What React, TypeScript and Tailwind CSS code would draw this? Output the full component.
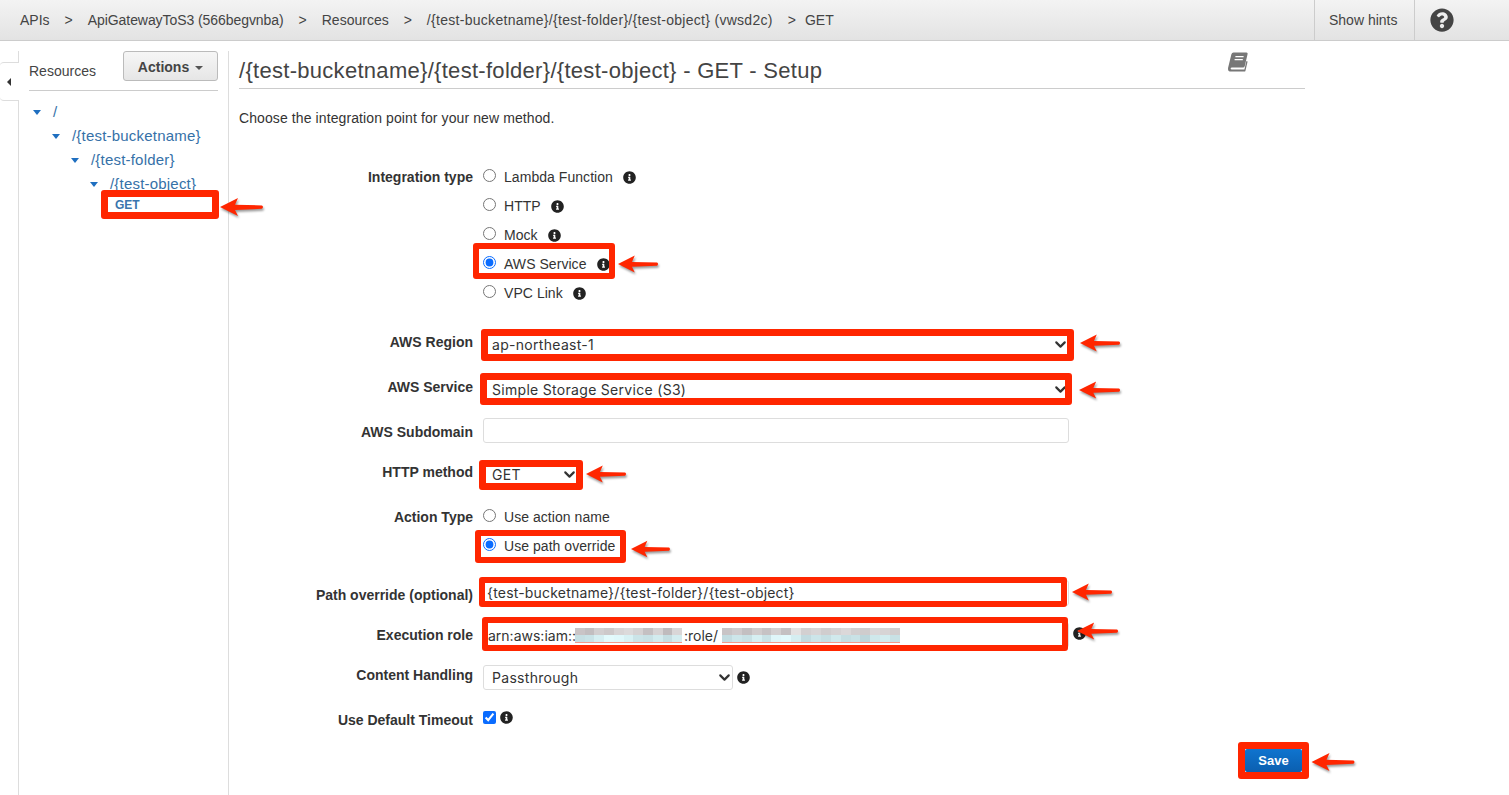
import React from "react";
import { FaInfoCircle, FaQuestionCircle } from "react-icons/fa";
import { ChevronDown } from "lucide-react";

const crumbs = [
  { text: "APIs", className: "" },
  { text: "ApiGatewayToS3 (566begvnba)", className: "tracking-[-0.07px]" },
  { text: "Resources", className: "" },
  { text: "/{test-bucketname}/{test-folder}/{test-object} (vwsd2c)", className: "tracking-[0.29px]" },
  { text: "GET", className: "-ml-[6px]" },
];

const blurA = {
  top: ["#c9c4c6", "#c2bec0", "#d2cfd0", "#cdc9ca", "#d8d5d6", "#dcdadb", "#d5d2d3", "#c4c0c2", "#d6d3d4", "#bfbbbd", "#d9d6d7"],
  bottom: ["#c6dfe3", "#c9e3e7", "#d6eff2", "#e3fafc", "#e0f8fb", "#d8f1f4", "#cbe4e8", "#c8e1e5", "#d2ebee", "#c5dee2", "#d4ecef"],
};
const blurB = {
  top: ["#c8c4c6", "#cfcbcd", "#c3bfc1", "#d0cccd", "#c6c2c4", "#d3d0d1", "#c4c0c2", "#e4e2e2", "#d3d0d1", "#d8d5d6", "#d0cdce", "#d5d2d3", "#dbd8d9", "#d2cfd0", "#cfcccd", "#dad7d8", "#d7d4d5", "#d1cecf"],
  bottom: ["#c3dce1", "#cde6ea", "#c8e1e5", "#d6eff2", "#c9e2e6", "#dff6f9", "#e2f9fc", "#d5eef1", "#c2dbe0", "#cce5e9", "#c6dfe3", "#d0e9ec", "#c5dee2", "#c9e2e6", "#bdd6db", "#cfe8eb", "#d3ecef", "#c8e1e5"],
};

function Info() {
  return <FaInfoCircle className="w-[13px] h-[13px] text-[#222] shrink-0" />;
}

function Radio({ label, checked, info }: { label: string; checked?: boolean; info?: boolean }) {
  return (
    <label className="h-[29px] flex items-center text-[14px] tracking-[0.05px] text-[#333]">
      <input
        type="radio"
        name={info ? "integration" : "action"}
        defaultChecked={checked}
        className="w-[13px] h-[13px] mr-[8px] -mt-[5px] accent-[#0a6cff]"
      />
      <span>{label}</span>
      {info && <span className="ml-[10px]"><Info /></span>}
    </label>
  );
}

function Select({ value, className }: { value: string; className: string }) {
  return (
    <div className={`relative ${className}`}>
      <select
        defaultValue={value}
        className="w-full h-full appearance-none bg-white border border-[#ddd] rounded-[3px] pl-[8px] pb-[2px] text-[14px] tracking-[0.3px] text-[#333] font-['Inter',sans-serif]"
      >
        <option>{value}</option>
      </select>
      <ChevronDown strokeWidth={3} className="absolute right-0 top-[4px] w-[17px] h-[17px] text-[#333] pointer-events-none" />
    </div>
  );
}

function Field({
  label,
  className,
  labelClass = "",
  children,
}: {
  label: string;
  className: string;
  labelClass?: string;
  children: React.ReactNode;
}) {
  return (
    <div className={`flex ${className}`}>
      <div className={`w-[234px] text-right font-bold text-[14px] leading-[20px] text-[#333] shrink-0 ${labelClass}`}>{label}</div>
      <div className="ml-[10px] flex-1 min-w-0">{children}</div>
    </div>
  );
}

function Blur({ data, className }: { data: { top: string[]; bottom: string[] }; className: string }) {
  return (
    <span className={`flex flex-col h-[15px] border-b border-[#f59a8c] shrink-0 ${className}`}>
      <span className="flex h-[7px]">
        {data.top.map((c, i) => <span key={i} className="flex-1" style={{ backgroundColor: c }} />)}
      </span>
      <span className="flex h-[7px]">
        {data.bottom.map((c, i) => <span key={i} className="flex-1" style={{ backgroundColor: c }} />)}
      </span>
    </span>
  );
}

function Arrow({ className }: { className: string }) {
  return (
    <svg viewBox="0 0 44 20" className={`absolute w-[44px] h-[20px] drop-shadow-[1px_2px_1px_rgba(0,0,0,0.4)] ${className}`}>
      <path d="M0 10 L18 1 L15 7.8 L42 8.4 Q44 10 42 11.8 L15 13 L18 19 Z" fill="#ff2600" />
    </svg>
  );
}

function Box({ className }: { className: string }) {
  return <div className={`absolute border-[#ff2600] rounded-[3px] pointer-events-none ${className}`} />;
}

function TreeRow({ level, label }: { level: string; label: string }) {
  return (
    <div className={`h-[24px] flex items-center text-[15px] tracking-[0.2px] text-[#3571a8] ${level}`}>
      <span className="w-0 h-0 border-x-[4px] border-x-transparent border-t-[5px] border-t-[#1f6fc0] mr-[12px]" />
      <span>{label}</span>
    </div>
  );
}

export default function App() {
  return (
    <div className="relative w-full h-screen overflow-hidden bg-white font-['Liberation_Sans',Arial,sans-serif] text-[#333]">
      {/* Top bar */}
      <div className="h-[41px] flex items-stretch justify-between border-b border-[#ccc] bg-gradient-to-b from-[#f3f3f3] to-[#e3e3e3] text-[14px] text-[#444]">
        <div className="flex items-center pl-[20px]">
          {crumbs.map((c, i) => (
            <React.Fragment key={c.text}>
              {i > 0 && <span className="mx-[15px]">&gt;</span>}
              <span className={c.className}>{c.text}</span>
            </React.Fragment>
          ))}
        </div>
        <div className="flex items-stretch">
          <div className="w-[101px] flex items-center pl-[14px] border-x border-[#ccc]">Show hints</div>
          <div className="w-[94px] flex items-center pl-[15px]">
            <FaQuestionCircle className="w-[24px] h-[24px] text-[#444]" />
          </div>
        </div>
      </div>

      <div className="flex pt-[10px] h-[754px]">
        {/* Collapse tab */}
        <div className="w-[19px] flex flex-col shrink-0">
          <div className="h-[11px] border-r border-[#ddd]" />
          <div className="h-[39px] flex items-center pl-[7px] border-y border-[#ddd] rounded-l-[4px]">
            <span className="w-0 h-0 border-y-[4px] border-y-transparent border-r-[4px] border-r-[#333]" />
          </div>
          <div className="flex-1 border-r border-[#ddd]" />
        </div>

        {/* Resources tree */}
        <div className="w-[210px] px-[10px] border-r border-[#ddd] shrink-0">
          <div className="h-[40px] flex justify-between items-start border-b border-[#ccc]">
            <span className="text-[14px] text-[#444] mt-[10px]">Resources</span>
            <button className="w-[95px] h-[30px] flex items-center justify-center gap-[6px] bg-gradient-to-b from-[#f6f6f6] to-[#e6e6e6] border border-[#bbb] rounded-[3px] font-bold text-[14px] text-[#444] pt-[3px]">
              Actions
              <span className="w-0 h-0 border-x-[4px] border-x-transparent border-t-[4px] border-t-[#555] mt-[1px]" />
            </button>
          </div>
          <div className="mt-[9px]">
            <TreeRow level="pl-[4px]" label="/" />
            <TreeRow level="pl-[23px]" label="/{test-bucketname}" />
            <TreeRow level="pl-[42px]" label="/{test-folder}" />
            <TreeRow level="pl-[61px]" label="/{test-object}" />
            <div className="pl-[86px] -mt-[1px] text-[12px] leading-[20px] font-bold text-[#3a75ad]">GET</div>
          </div>
        </div>

        {/* Setup form */}
        <div className="pl-[10px] w-[1076px] shrink-0">
          <div className="h-[38px] flex justify-between items-center border-b border-[#ccc] pr-[57px]">
            <h1 className="text-[22px] tracking-[0.29px] text-[#444] mt-[1px]">/{"{test-bucketname}"}/{"{test-folder}"}/{"{test-object}"} - GET - Setup</h1>
            <svg viewBox="0 0 20 20" className="w-[20px] h-[20px] text-[#777] -mt-[16px]">
              <path fill="currentColor" d="M5.5 0.5 H18.5 Q20 0.5 19.6 2 L16.8 14 Q16.4 15.5 15 15.5 H4 Q2.6 15.5 2.6 16.6 Q2.6 17.6 4 17.6 H16.4 L18.4 9 L19.6 9.5 L17.4 19 Q17.2 19.6 16.4 19.6 H3 Q0 19.6 0 17 Q0 16 0.4 14.6 L3.4 2.2 Q3.8 0.5 5.5 0.5 Z" />
              <path stroke="#fff" strokeWidth="1.4" d="M7.4 4.6 H15.6 M6.6 7.6 H14.8" />
            </svg>
          </div>
          <p className="mt-[19px] text-[14px] tracking-[0.1px] leading-[20px]">Choose the integration point for your new method.</p>

          <form className="mt-[35px]">
            <Field label="Integration type" className="h-[145px]" labelClass="pt-[4px]">
              <Radio info label="Lambda Function" />
              <Radio info label="HTTP" />
              <Radio info label="Mock" />
              <Radio info checked label="AWS Service" />
              <Radio info label="VPC Link" />
            </Field>
            <Field label="AWS Region" className="mt-[24px] h-[26px]">
              <Select value="ap-northeast-1" className="w-[586px] h-[26px]" />
            </Field>
            <Field label="AWS Service" className="mt-[19px] h-[26px]">
              <Select value="Simple Storage Service (S3)" className="w-[586px] h-[26px]" />
            </Field>
            <Field label="AWS Subdomain" className="mt-[15px] h-[25px]" labelClass="pt-[4px]">
              <input className="block w-[586px] h-[25px] border border-[#ddd] rounded-[3px]" />
            </Field>
            <Field label="HTTP method" className="mt-[19px] h-[26px]">
              <Select value="GET" className="w-[95px] h-[26px]" />
            </Field>
            <Field label="Action Type" className="mt-[15px] h-[58px]" labelClass="pt-[4px]">
              <Radio label="Use action name" />
              <Radio checked label="Use path override" />
            </Field>
            <Field label="Path override (optional)" className="mt-[19px] h-[26px]" labelClass="pt-[5px]">
              <input
                defaultValue="{test-bucketname}/{test-folder}/{test-object}"
                className="block w-[586px] h-[26px] border border-[#ddd] rounded-[3px] pl-[3px] pb-[2px] text-[14px] tracking-[0.19px] text-[#333] font-['Inter',sans-serif]"
              />
            </Field>
            <Field label="Execution role" className="mt-[16px] h-[26px]" labelClass="pt-[3px]">
              <div className="flex items-center gap-[4px]">
                <div className="w-[586px] h-[26px] flex items-center border border-[#ddd] rounded-[3px] pl-[4px] text-[14px] text-[#333] font-['Inter',sans-serif] shrink-0">
                  <span className="w-[87px] shrink-0">arn:aws:iam::</span>
                  <Blur data={blurA} className="w-[107px]" />
                  <span className="w-[40px] pl-[2px] shrink-0">:role/</span>
                  <Blur data={blurB} className="w-[178px]" />
                </div>
                <span className="-mt-[4px]"><Info /></span>
              </div>
            </Field>
            <Field label="Content Handling" className="mt-[17px] h-[25px]">
              <div className="flex items-center gap-[4px]">
                <Select value="Passthrough" className="w-[250px] h-[25px] [&>select]:pb-0" />
                <Info />
              </div>
            </Field>
            <Field label="Use Default Timeout" className="mt-[20px] h-[20px]">
              <div className="flex items-center gap-[4px] h-[14px]">
                <input type="checkbox" defaultChecked className="w-[13px] h-[13px] m-0 accent-[#0a6cff]" />
                <Info />
              </div>
            </Field>
            <div className="mt-[19px] flex justify-end pr-[3px]">
              <button type="button" className="w-[57px] h-[23px] bg-gradient-to-b from-[#0f74cf] to-[#0b5fb0] rounded-[2px] text-white font-bold text-[13px]">
                Save
              </button>
            </div>
          </form>
        </div>
      </div>

      {/* Screenshot annotations */}
      <Box className="left-[101px] top-[190px] w-[118px] h-[29px] border-x-[7px] border-y-[7px]" />
      <Box className="left-[473px] top-[243px] w-[142px] h-[36px] border-[6px]" />
      <Box className="left-[481px] top-[329px] w-[593px] h-[32px] border-[7px]" />
      <Box className="left-[480px] top-[373px] w-[592px] h-[32px] border-[7px]" />
      <Box className="left-[479px] top-[460px] w-[104px] h-[30px] border-[7px]" />
      <Box className="left-[475px] top-[530px] w-[151px] h-[33px] border-[6px]" />
      <Box className="left-[479px] top-[577px] w-[588px] h-[30px] border-[6px]" />
      <Box className="left-[482px] top-[617px] w-[586px] h-[34px] border-[6px]" />
      <Box className="left-[1238px] top-[742px] w-[71px] h-[37px] border-[7px]" />

      <Arrow className="left-[220px] top-[197px]" />
      <Arrow className="left-[618px] top-[254px] !w-[41px]" />
      <Arrow className="left-[1080px] top-[333px] !w-[41px]" />
      <Arrow className="left-[1079px] top-[380px] !w-[42px]" />
      <Arrow className="left-[586px] top-[464px] !w-[41px]" />
      <Arrow className="left-[631px] top-[539px] !w-[40px]" />
      <Arrow className="left-[1072px] top-[582px] !w-[41px]" />
      <Arrow className="left-[1077px] top-[621px] !w-[42px]" />
      <Arrow className="left-[1311px] top-[752px] !w-[45px]" />
    </div>
  );
}
